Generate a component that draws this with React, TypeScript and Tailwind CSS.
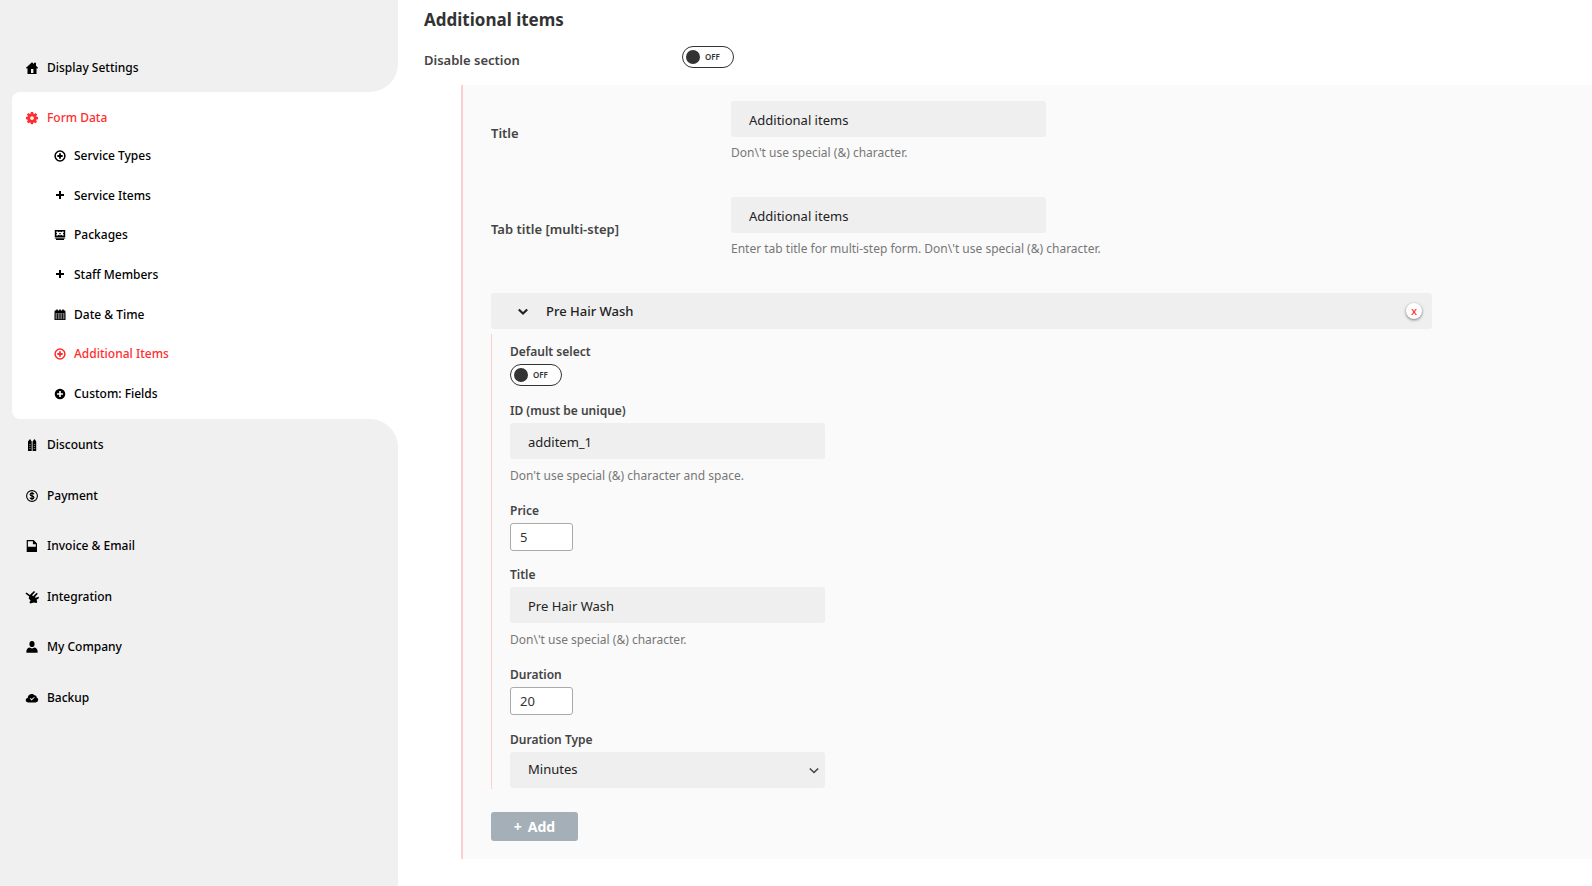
import type { ReactNode } from 'react';

type IconProps = { children: ReactNode };

function Icon({ children }: IconProps) {
  return (
    <svg viewBox="0 0 12 12" className="size-3 shrink-0 overflow-visible" fill="currentColor" aria-hidden="true">
      {children}
    </svg>
  );
}

const HomeIcon = () => (
  <Icon>
    <path fillRule="evenodd" d="M6 .2 8 2V.8h2v3l2 2-.8 1L10.500 6.200V12h-9V6.200L.8 6.800 0 5.800zM5 7v4h2.400V7z" />
  </Icon>
);

const GearIcon = () => (
  <Icon>
    <path
      fillRule="evenodd"
      d="M4.900 0h2.200l.3 1.600.9.400 1.400-1 1.500 1.500-1 1.400.4.900 1.400.3v2.200l-1.500.3-.4.900.9 1.300-1.500 1.500-1.300-.9-.9.400-.3 1.500H4.900l-.3-1.500-.9-.4-1.300.9L.9 9.800l.9-1.300-.4-.9L0 7.300V5.100l1.500-.3.4-.9-1-1.400L2.400 1l1.400 1 .8-.4zM6 4.200a1.900 1.900 0 1 0 0 3.800 1.900 1.900 0 0 0 0-3.800z"
    />
  </Icon>
);

const CirclePlusIcon = () => (
  <Icon>
    <circle cx="6" cy="6" r="4.900" fill="none" stroke="currentColor" strokeWidth="1.500" />
    <path d="M5.100 3.300h1.800v1.800h1.800v1.800H6.900v1.800H5.100V6.900H3.300V5.100h1.800z" />
  </Icon>
);

const PlusIcon = () => (
  <Icon>
    <path d="M5 1h2v3h3v2H7v3H5V6H2V4h3z" />
  </Icon>
);

const PackageIcon = () => (
  <Icon>
    <path fillRule="evenodd" d="M.8 1h10.400v7.400H.8zM2.300 2.500v1.200l1 .9-1 .8v1.200h1.500l1-.8 1.200.8 1.200-.8 1 .8h1.500V5.400l-1-.8 1-.9V2.500H8.200l-1 .7L6 2.500l-1.200.7-1-.7z" />
    <path d="M5.300 4h1.400v1.200H5.300zM.8 9h10.400v.5H.8zM2 9.800h8V11H2z" />
  </Icon>
);

const CalendarIcon = () => (
  <Icon>
    <path d="M.6 1.500h1.600V.5h1.600v1h1.400V.5h1.600v1h1.400V.5h1.600v1h1.600V4H.6z" />
    <path d="M.6 4h10.800v7H.6z" opacity=".55" />
    <path d="M.6 4h.9v7H.6zM3.200 4.500H4V11h-.8zM5.600 4.500h.8V11h-.8zM8 4.500h.8V11H8zM10.500 4h.9v7h-.9zM.6 10.300h10.800v.8H.6z" />
  </Icon>
);

const CirclePlusSolidIcon = () => (
  <Icon>
    <path fillRule="evenodd" d="M6 .7a5.300 5.300 0 1 0 0 10.600A5.300 5.300 0 0 0 6 .7zM5.200 3h1.600v2.200H9v1.600H6.800V9H5.200V6.800H3V5.200h2.200z" />
  </Icon>
);

const DiscountIcon = () => (
  <Icon>
    <path fillRule="evenodd" d="M4 0 5.700 2.600V12H2V2.600zM3.200 5v.5h1.400V5zm0 2.200v.5h1.400v-.5zm0 2.200v.5h1.400v-.5zM8.500 0l1.700 2.600V12H6.600V2.600zm-.7 5v.5h1.400V5zm0 2.200v.5h1.400v-.5zm0 2.200v.5h1.400v-.5z" />
  </Icon>
);

const PaymentIcon = () => (
  <Icon>
    <circle cx="6" cy="6" r="5.400" fill="none" stroke="currentColor" strokeWidth="1.100" />
    <path d="M7.900 4.200C7.600 3.500 6.900 3.200 6 3.200c-1.100 0-1.900.5-1.900 1.300C4.100 6.500 7.900 5.400 7.900 7.400c0 .9-.8 1.400-1.900 1.400-1 0-1.800-.4-2-1.200M6 2v8" fill="none" stroke="currentColor" strokeWidth="1.200" />
  </Icon>
);

const InvoiceIcon = () => (
  <Icon>
    <path fillRule="evenodd" d="M.7 0h7L11 3.500V12H.7zM1.900 1.200v5.600h7.900V4.300H6.900V1.200z" />
  </Icon>
);

const IntegrationIcon = () => (
  <Icon>
    <path d="M-.6 2.400.6 1.500l3.200 2.400L8 .1l1.100.9-3 3.300 1 .9 3.600-3.500 1.100 1L8.800 6.300l.8.500 3-1 .5 1.200-2.500 1.700.7 2.500-1 .8-2.500-.4-3.500 1-.9-1.400 1.200-1.800-1.900-2 .5-2z" />
  </Icon>
);

const UserIcon = () => (
  <Icon>
    <ellipse cx="6" cy="3" rx="2.600" ry="3.100" />
    <path d="M.4 11.800c-.4-3 1-4.700 3-5.200 1.500 1.100 3.700 1.100 5.200 0 2 .5 3.400 2.200 3 5.200z" />
  </Icon>
);

const CloudIcon = () => (
  <Icon>
    <path fillRule="evenodd" d="M2.500 10.400C-1.200 10.200-.9 6.300 1.700 5.900 1.800 2.200 6.400.6 8.500 3.300c1.600 0 2.200 1.200 2.100 2.300 2.400.7 2 4.800-.9 4.800zM3.800 6.600l1.800 1.900 3.100-2.900-.6-.7-2.400 2.200-1.200-1.200z" />
  </Icon>
);

const formDataItems = [
  { label: 'Service Types', icon: <CirclePlusIcon /> },
  { label: 'Service Items', icon: <PlusIcon /> },
  { label: 'Packages', icon: <PackageIcon /> },
  { label: 'Staff Members', icon: <PlusIcon /> },
  { label: 'Date & Time', icon: <CalendarIcon /> },
  { label: 'Additional Items', icon: <CirclePlusIcon />, active: true },
  { label: 'Custom: Fields', icon: <CirclePlusSolidIcon /> },
];

const bottomItems = [
  { label: 'Discounts', icon: <DiscountIcon /> },
  { label: 'Payment', icon: <PaymentIcon /> },
  { label: 'Invoice & Email', icon: <InvoiceIcon /> },
  { label: 'Integration', icon: <IntegrationIcon /> },
  { label: 'My Company', icon: <UserIcon /> },
  { label: 'Backup', icon: <CloudIcon /> },
];

function Sidebar() {
  return (
    <aside className="flex w-[398px] shrink-0 flex-col bg-[#f0f0f0] text-xs font-medium text-black">
      <div className="bg-white">
        <div className="rounded-br-[28px] bg-[#f0f0f0] pt-[42px] pl-[26px]">
          <a href="#display" className="flex h-[50px] items-center gap-[9px] pt-0.5">
            <HomeIcon />
            Display Settings
          </a>
        </div>
      </div>

      <div className="bg-[#f0f0f0] pl-3">
        <div className="rounded-l-lg bg-white pt-[7px] pb-[6px]">
          <a href="#form-data" className="flex h-9 items-center gap-[9px] pt-0.5 pl-[14px] text-[#ff2d2d]">
            <GearIcon />
            Form Data
          </a>
          <ul className="grid h-[278px] auto-rows-fr pl-[42px]">
            {formDataItems.map((item) => (
              <li key={item.label} className="flex pt-0.5">
                <a href="#item" className={item.active ? 'flex items-center gap-2 text-[#ff2d2d]' : 'flex items-center gap-2'}>
                  {item.icon}
                  {item.label}
                </a>
              </li>
            ))}
          </ul>
        </div>
      </div>

      <div className="flex-1 bg-white">
        <div className="h-full rounded-tr-[28px] bg-[#f0f0f0] pl-[26px]">
          <ul className="grid h-[303px] auto-rows-fr">
            {bottomItems.map((item) => (
              <li key={item.label} className="flex pt-0.5">
                <a href="#section" className="flex items-center gap-[9px]">
                  {item.icon}
                  {item.label}
                </a>
              </li>
            ))}
          </ul>
        </div>
      </div>
    </aside>
  );
}

function Toggle({ id }: { id: string }) {
  return (
    <label htmlFor={id} className="flex h-[22px] w-[52px] cursor-pointer items-center gap-[5px] rounded-full border border-[#333] bg-white pl-[3px]">
      <input id={id} type="checkbox" role="switch" className="size-[14px] appearance-none rounded-full bg-[#333]" />
      <span className="text-[8px] leading-none font-semibold text-[#333]">OFF</span>
    </label>
  );
}

function TextField({ id, value }: { id: string; value: string }) {
  return (
    <input
      id={id}
      type="text"
      defaultValue={value}
      className="block h-9 w-[315px] rounded-[3px] bg-[#efefef] px-[18px] pt-0.5 text-[13px] text-[#222] outline-none"
    />
  );
}

function SmallField({ id, value }: { id: string; value: string }) {
  return (
    <input
      id={id}
      type="text"
      defaultValue={value}
      className="block h-7 w-[63px] rounded-[3px] border border-[#aaa] bg-white px-[9px] text-[13px] text-[#333] outline-none"
    />
  );
}

function FieldLabel({ id, children }: { id: string; children: ReactNode }) {
  return (
    <label htmlFor={id} className="block h-6 text-xs leading-6 font-semibold text-[#444]">
      {children}
    </label>
  );
}

function SettingRow({ id, label, value, help }: { id: string; label: string; value: string; help: string }) {
  return (
    <div className="flex h-24">
      <label htmlFor={id} className="w-60 shrink-0 pt-5 text-[13px] leading-6 font-semibold text-[#444]">
        {label}
      </label>
      <div>
        <TextField id={id} value={value} />
        <p className="mt-1 text-xs leading-6 text-[#777]">{help}</p>
      </div>
    </div>
  );
}

export default function App() {
  return (
    <div className="flex min-h-screen bg-white font-['Noto_Sans','Open_Sans',sans-serif]">
      <Sidebar />

      <main className="min-w-0 flex-1">
        <div className="pl-[26px]">
          <h1 className="pt-2 text-[17px] leading-6 font-bold text-[#333]">Additional items</h1>
          <div className="mt-3 flex h-[41px] items-start">
            <label htmlFor="disable-section" className="w-[258px] pt-1 text-[13px] leading-6 font-semibold text-[#444]">
              Disable section
            </label>
            <div className="pt-0.5">
              <Toggle id="disable-section" />
            </div>
          </div>
        </div>

        <section className="ml-[63px] border-l-2 border-[#fccfcf] bg-[#fafafa] pt-4 pr-40 pb-[18px] pl-7">
          <SettingRow id="section-title" label="Title" value="Additional items" help="Don\'t use special (&) character." />
          <SettingRow
            id="tab-title"
            label="Tab title [multi-step]"
            value="Additional items"
            help="Enter tab title for multi-step form. Don\'t use special (&) character."
          />

          <div className="flex h-9 items-center justify-between rounded-[3px] bg-[#efefef] pr-[10px] pl-[27px]">
            <button type="button" className="flex items-center gap-[18px] pt-0.5 text-[13px] font-medium text-[#222]">
              <svg viewBox="0 0 10 10" className="size-[10px]" fill="none" stroke="currentColor" strokeWidth="2.200" aria-hidden="true">
                <path d="m.8 2.500 4.200 4 4.200-4" />
              </svg>
              Pre Hair Wash
            </button>
            <button
              type="button"
              className="flex size-4 items-center justify-center rounded-full bg-white text-[9px] leading-none font-semibold text-[#ff2d2d] shadow-[0_1px_3px_rgba(0,0,0,0.5)]"
            >
              X
            </button>
          </div>

          <div className="mt-[5px] border-l border-[#fccfcf] pt-[6px] pb-px pl-[18px]">
            <FieldLabel id="default-select">Default select</FieldLabel>
            <Toggle id="default-select" />

            <div className="mt-[13px]">
              <FieldLabel id="item-id">ID (must be unique)</FieldLabel>
              <TextField id="item-id" value="additem_1" />
              <p className="mt-[5px] text-xs leading-6 text-[#777]">Don't use special (&) character and space.</p>
            </div>

            <div className="mt-[11px]">
              <FieldLabel id="item-price">Price</FieldLabel>
              <SmallField id="item-price" value="5" />
            </div>

            <div className="mt-3">
              <FieldLabel id="item-title">Title</FieldLabel>
              <TextField id="item-title" value="Pre Hair Wash" />
              <p className="mt-[5px] text-xs leading-6 text-[#777]">Don\'t use special (&) character.</p>
            </div>

            <div className="mt-[11px]">
              <FieldLabel id="item-duration">Duration</FieldLabel>
              <SmallField id="item-duration" value="20" />
            </div>

            <div className="mt-[13px]">
              <FieldLabel id="item-duration-type">Duration Type</FieldLabel>
              <div className="relative w-[315px]">
                <select
                  id="item-duration-type"
                  defaultValue="minutes"
                  className="block h-9 w-full appearance-none rounded-[3px] bg-[#efefef] px-[18px] text-[13px] text-[#222] outline-none"
                >
                  <option value="minutes">Minutes</option>
                </select>
                <svg
                  viewBox="0 0 10 10"
                  className="pointer-events-none absolute top-[14px] right-[6px] size-[10px] text-[#444]"
                  fill="none"
                  stroke="currentColor"
                  strokeWidth="1.600"
                  aria-hidden="true"
                >
                  <path d="m.8 2.500 4.200 4 4.200-4" />
                </svg>
              </div>
            </div>
          </div>

          <button
            type="button"
            className="mt-[23px] flex h-[29px] w-[87px] items-center justify-center gap-[6px] rounded-[3px] bg-[#a4afb7] text-sm font-bold text-white"
          >
            <span>+</span>
            <span>Add</span>
          </button>
        </section>
      </main>
    </div>
  );
}
